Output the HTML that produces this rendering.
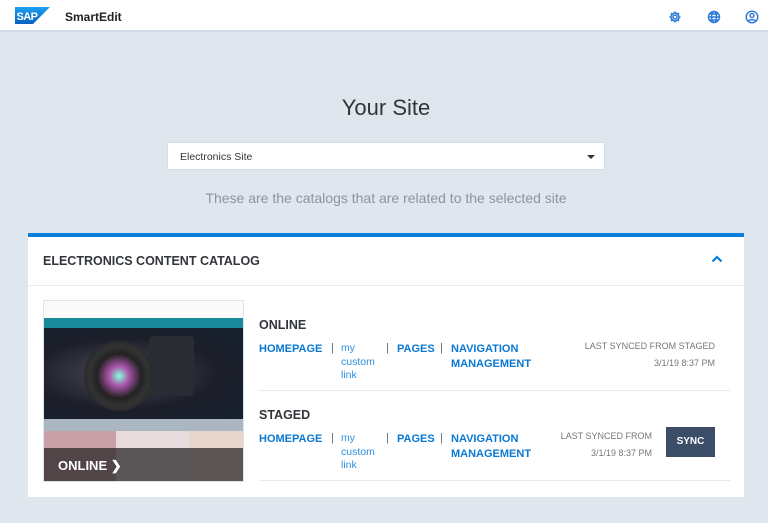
<!DOCTYPE html>
<html><head><meta charset="utf-8"><style>
*{margin:0;padding:0;box-sizing:border-box}
body{width:768px;height:523px;overflow:hidden;background:#dfe6ee;font-family:"Liberation Sans",sans-serif;position:relative;color:#32363a}
.a{position:absolute}
.top{left:0;top:0;width:768px;height:32px;background:#fff;border-bottom:2px solid #d3dce6}
.lnk{color:#0a78d1;font-weight:bold;font-size:11px;line-height:15px}
.cl{color:#2d8fe0;font-size:10.5px;line-height:13.5px}
.sep{color:#666;font-size:11px}
.gr{color:#74777a;font-size:9px;text-align:right;line-height:13px}
</style></head><body>
<div class="a top"></div>
<svg class="a" style="left:15px;top:7px" width="35" height="17" viewBox="0 0 35 17"><defs><linearGradient id="g" x1="0" y1="0" x2="0" y2="1"><stop offset="0" stop-color="#1ea0f0"/><stop offset="1" stop-color="#0a60c0"/></linearGradient></defs><polygon points="0,0 35,0 18,17 0,17" fill="url(#g)"/><text x="1.5" y="13" font-family="Liberation Sans" font-weight="bold" font-size="11" letter-spacing="-0.6" fill="#fff">SAP</text></svg>
<div class="a" style="left:65px;top:10px;font-size:12px;font-weight:bold;color:#222">SmartEdit</div>
<svg class="a" style="left:668px;top:10px" width="14" height="14" viewBox="0 0 14 14" fill="none" stroke="#2a7ad6" stroke-width="1.5"><circle cx="7" cy="7" r="2"/><path d="M7 1.5v2M7 10.5v2M1.5 7h2M10.5 7h2M3 3l1.4 1.4M9.6 9.6L11 11M3 11l1.4-1.4M9.6 4.4L11 3"/><circle cx="7" cy="7" r="4"/></svg>
<svg class="a" style="left:707px;top:10px" width="14" height="14" viewBox="0 0 14 14" fill="none" stroke="#2a7ad6" stroke-width="1.4"><circle cx="7" cy="7" r="5.5"/><ellipse cx="7" cy="7" rx="2.4" ry="5.5"/><path d="M1.5 7h11M2.5 4h9M2.5 10h9"/></svg>
<svg class="a" style="left:745px;top:10px" width="14" height="14" viewBox="0 0 14 14" fill="none" stroke="#2a7ad6" stroke-width="1.4"><circle cx="7" cy="7" r="5.8"/><circle cx="7" cy="5.5" r="2"/><path d="M3.3 11.2c1-2 6.4-2 7.4 0"/></svg>

<div class="a" style="left:0;width:772px;top:95px;text-align:center;font-size:22px;color:#32363a">Your Site</div>
<div class="a" style="left:167px;top:142px;width:438px;height:28px;background:#fff;border:1px solid #d6dde5;font-size:10.5px;padding:8px 12px;color:#32363a">Electronics Site</div>
<div class="a" style="left:587px;top:155px;width:0;height:0;border-left:4px solid transparent;border-right:4px solid transparent;border-top:4px solid #333"></div>
<div class="a" style="left:0;width:772px;top:190px;text-align:center;font-size:14px;color:#8a95a2">These are the catalogs that are related to the selected site</div>

<div class="a" style="left:28px;top:233px;width:716px;height:264px;background:#fff;border-top:4px solid #0a7fe0"></div>
<div class="a" style="left:28px;top:285px;width:716px;height:1px;background:#e8ecf0"></div>
<div class="a" style="left:43px;top:254px;font-size:12.5px;font-weight:bold;color:#32363a">ELECTRONICS CONTENT CATALOG</div>
<svg class="a" style="left:711px;top:255px" width="12" height="8" viewBox="0 0 12 8"><path d="M1.5 6.5L6 2l4.5 4.5" fill="none" stroke="#0a7fe0" stroke-width="2.2"/></svg>

<div class="a" style="left:43px;top:300px;width:201px;height:182px;background:#fff;border:1px solid #dde3ea;overflow:hidden">
 <div class="a" style="left:0;top:0;width:201px;height:17px;background:#fafafa"></div>
 <div class="a" style="left:0;top:17px;width:201px;height:10px;background:#1a8a9a"></div>
 <div class="a" style="left:0;top:27px;width:201px;height:91px;background:radial-gradient(ellipse at 40% 50%,#4a4a58 0%,#1c1f2a 55%,#15202e 100%)"></div>
 <div class="a" style="left:40px;top:40px;width:70px;height:70px;border-radius:50%;background:radial-gradient(circle,#8fd 0%,#a5a 20%,#222 45%,#333 60%,#111 100%)"></div>
 <div class="a" style="left:105px;top:35px;width:45px;height:60px;background:#2a2c33;border-radius:4px"></div>
 <div class="a" style="left:0;top:118px;width:201px;height:12px;background:#aab6c2"></div>
 <div class="a" style="left:0;top:130px;width:72px;height:52px;background:#c8a0a8"></div>
 <div class="a" style="left:72px;top:130px;width:73px;height:52px;background:#e8dbdd"></div>
 <div class="a" style="left:145px;top:130px;width:56px;height:52px;background:#e8d6cc"></div>
 <div class="a" style="left:0;top:147px;width:201px;height:35px;background:rgba(30,30,30,.7)"></div>
 <div class="a" style="left:14px;top:157px;color:#fff;font-size:13px;font-weight:bold">ONLINE ❯</div>
</div>

<div class="a" style="left:259px;top:318px;font-size:12.5px;font-weight:bold">ONLINE</div>
<div class="a lnk" style="left:259px;top:342px">HOMEPAGE</div>
<div class="a sep" style="left:331px;top:342px">|</div>
<div class="a cl" style="left:341px;top:342px">my<br>custom<br>link</div>
<div class="a sep" style="left:386px;top:342px">|</div>
<div class="a lnk" style="left:397px;top:342px">PAGES</div>
<div class="a sep" style="left:440px;top:342px">|</div>
<div class="a lnk" style="left:451px;top:342px">NAVIGATION<br>MANAGEMENT</div>
<div class="a gr" style="left:560px;top:338px;width:155px;line-height:17px">LAST SYNCED FROM STAGED<br>3/1/19 8:37 PM</div>
<div class="a" style="left:259px;top:390px;width:471px;height:1px;background:#e4e9ee"></div>

<div class="a" style="left:259px;top:408px;font-size:12.5px;font-weight:bold">STAGED</div>
<div class="a lnk" style="left:259px;top:432px">HOMEPAGE</div>
<div class="a sep" style="left:331px;top:432px">|</div>
<div class="a cl" style="left:341px;top:432px">my<br>custom<br>link</div>
<div class="a sep" style="left:386px;top:432px">|</div>
<div class="a lnk" style="left:397px;top:432px">PAGES</div>
<div class="a sep" style="left:440px;top:432px">|</div>
<div class="a lnk" style="left:451px;top:432px">NAVIGATION<br>MANAGEMENT</div>
<div class="a gr" style="left:540px;top:428px;width:112px;line-height:17px">LAST SYNCED FROM<br>3/1/19 8:37 PM</div>
<div class="a" style="left:666px;top:427px;width:49px;height:30px;background:#3b4d67;color:#fff;font-size:10px;font-weight:bold;text-align:center;line-height:30px">SYNC</div>
<div class="a" style="left:259px;top:480px;width:471px;height:1px;background:#e4e9ee"></div>
</body></html>
